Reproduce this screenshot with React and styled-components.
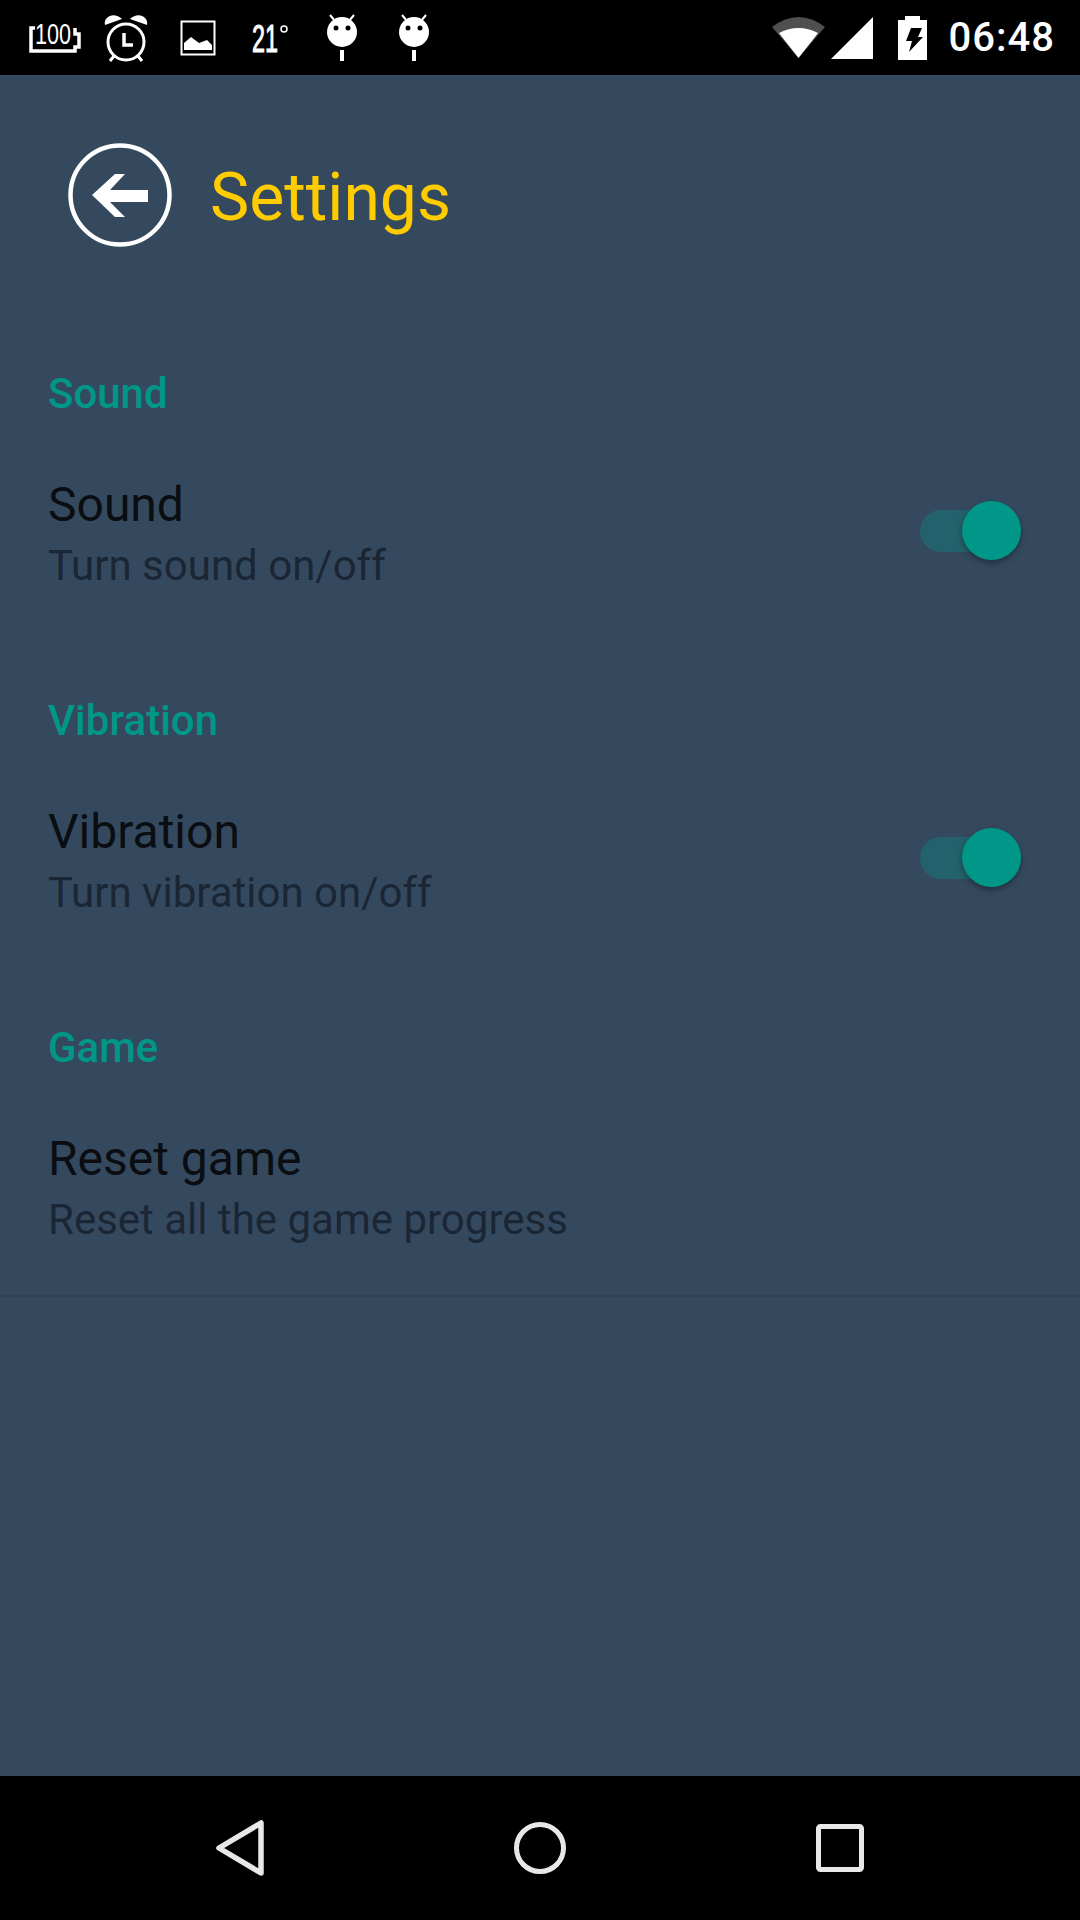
import React from "react";
import styled, { createGlobalStyle } from "styled-components";

const GlobalStyle = createGlobalStyle`
  html, body { margin: 0; padding: 0; background: #000; }
  body { font-family: Roboto, "Noto Sans", sans-serif; }
`;

/* ---------- styles ---------- */

const Screen = styled.div`
  width: 1080px;
  height: 1920px;
  display: flex;
  flex-direction: column;
  background: #35495e;
  overflow: hidden;
`;

const StatusBar = styled.div`
  height: 75px;
  flex: none;
  background: #000;
  display: flex;
  justify-content: space-between;
  align-items: center;
  color: #fff;
`;

const StatusGroup = styled.div`
  display: flex;
  align-items: center;
  padding: ${(p) => (p.$right ? "0 25px 0 0" : "0 0 0 29px")};
`;

const Icon = styled.svg`
  display: block;
  flex: none;
  overflow: visible;
  margin-left: ${(p) => p.$gap || 0}px;
`;

const Clock = styled.span`
  margin-left: 22px;
  font-size: 40px;
  line-height: 75px;
  font-weight: 500;
  letter-spacing: 1px;
`;

const Main = styled.main`
  flex: 1;
  display: flex;
  flex-direction: column;
`;

const Header = styled.header`
  height: 196px;
  flex: none;
  box-sizing: border-box;
  display: flex;
  align-items: center;
  padding: 44px 0 0 68px;
  gap: 38px;
`;

const Title = styled.h1`
  margin: 6px 0 0;
  font-size: 66px;
  line-height: 76px;
  font-weight: 400;
  color: #ffcc00;
`;

const Section = styled.section`
  height: 327px;
  flex: none;
  padding: 97px 48px 0 48px;
  box-sizing: border-box;
`;

const SectionLabel = styled.h2`
  margin: 0;
  font-size: 42px;
  line-height: 52px;
  font-weight: 500;
  color: #009688;
`;

const Row = styled.div`
  margin-top: 53px;
  display: flex;
  justify-content: space-between;
  align-items: center;
`;

const RowText = styled.div`
  display: flex;
  flex-direction: column;
`;

const RowTitle = styled.div`
  font-size: 48px;
  line-height: 64px;
  color: #0a0d11;
`;

const RowSub = styled.div`
  font-size: 42px;
  line-height: 56px;
  margin-top: 1px;
  color: #1b2635;
`;

const SwitchTrack = styled.div`
  position: relative;
  width: 96px;
  height: 42px;
  margin: 0 16px 5px 0;
  border-radius: 21px;
  background: #23626c;
`;

const SwitchKnob = styled.div`
  position: absolute;
  top: -9px;
  right: -5px;
  width: 59px;
  height: 59px;
  border-radius: 50%;
  background: #009688;
  box-shadow: 0 3px 6px rgba(0, 0, 0, 0.35);
`;

const Divider = styled.div`
  height: 2px;
  flex: none;
  margin-top: 43px;
  background: #2f4255;
`;

const NavBar = styled.nav`
  height: 144px;
  flex: none;
  background: #000;
  display: flex;
  justify-content: center;
  align-items: center;
`;

const NavButton = styled.div`
  width: 300px;
  display: flex;
  justify-content: center;
`;

/* ---------- icons ---------- */

const narrow = "Liberation Sans Narrow, Liberation Sans, sans-serif";

const Battery100 = () => (
  <Icon width="52" height="50" viewBox="0 0 52 50" fill="none">
    <path d="M6 15H2V38H46V34H50V21H46V15" stroke="#fff" strokeWidth="3.5" />
    <text x="6" y="31" fontFamily={narrow} fontSize="29" fill="#fff" textLength="36" lengthAdjust="spacingAndGlyphs">100</text>
  </Icon>
);

const Alarm = () => (
  <Icon $gap={23} width="44" height="48" viewBox="0 0 44 48" fill="none">
    <circle cx="22" cy="28" r="18" stroke="#fff" strokeWidth="3" />
    <path d="M20 19V31H29" stroke="#fff" strokeWidth="3.5" />
    <path d="M1 11C-1 3 10-3 18 5ZM43 11C45 3 34-3 26 5Z" fill="#fff" />
    <path d="M10 42L6 47M34 42L38 47" stroke="#fff" strokeWidth="3" />
  </Icon>
);

const ImageIcon = () => (
  <Icon $gap={32} width="36" height="36" viewBox="0 0 36 36" fill="none">
    <rect x="1.5" y="1.5" width="33" height="33" stroke="#fff" strokeWidth="2" />
    <path d="M4 30V23L11 17L19 23L27 20L32 25V30Z" fill="#fff" />
  </Icon>
);

const Weather = () => (
  <Icon $gap={36} width="37" height="50" viewBox="0 0 37 50">
    <text x="0" y="39" fontFamily={narrow} fontSize="38" fill="#fff" stroke="#fff" strokeWidth="1" textLength="26" lengthAdjust="spacingAndGlyphs">21</text>
    <circle cx="32" cy="16" r="3" fill="none" stroke="#fff" strokeWidth="1.5" />
  </Icon>
);

const Droid = ({ gap }) => (
  <Icon $gap={gap} width="30" height="46" viewBox="0 0 30 46">
    <path d="M3 0L8 6M27 0L22 6" stroke="#fff" strokeWidth="2" />
    <circle cx="15" cy="17" r="15" fill="#fff" />
    <circle cx="9" cy="13" r="2.5" fill="#000" />
    <circle cx="21" cy="13" r="2.5" fill="#000" />
    <rect x="13" y="35" width="4" height="11" fill="#fff" />
  </Icon>
);

const Wifi = () => (
  <Icon width="53" height="42" viewBox="0 0 53 42">
    <path d="M0 10Q26.5 -10 53 10L26.5 41Z" fill="#4f4f4f" />
    <path d="M7 16Q26.5 6 46 16L26.5 41Z" fill="#fff" />
  </Icon>
);

const Signal = () => (
  <Icon $gap={6} width="42" height="42" viewBox="0 0 42 42">
    <path d="M0 42L42 0V42Z" fill="#fff" />
  </Icon>
);

const BatteryCharging = () => (
  <Icon $gap={25} width="29" height="44" viewBox="0 0 29 44">
    <path d="M7 0H22V4H29V44H0V4H7Z" fill="#fff" />
    <path d="M13 12H24L20 21H25L11 36L14 25H8Z" fill="#000" />
  </Icon>
);

const BackCircle = () => (
  <Icon width="104" height="104" viewBox="0 0 104 104" fill="none">
    <circle cx="52" cy="52" r="49.5" stroke="#fff" strokeWidth="4.5" />
    <path d="M24 52L47 31H57L42 47H80V59H42L57 74H47Z" fill="#fff" />
  </Icon>
);

const NavBack = () => (
  <Icon width="50" height="58" viewBox="0 0 50 58" fill="none">
    <path d="M46 4V54L4 29Z" stroke="#e8e8e8" strokeWidth="5.5" strokeLinejoin="round" />
  </Icon>
);

const NavHome = () => (
  <Icon width="52" height="52" viewBox="0 0 52 52" fill="none">
    <circle cx="26" cy="26" r="23.5" stroke="#e8e8e8" strokeWidth="5" />
  </Icon>
);

const NavRecent = () => (
  <Icon width="48" height="48" viewBox="0 0 48 48" fill="none">
    <rect x="2.5" y="2.5" width="43" height="43" rx="2" stroke="#e8e8e8" strokeWidth="5" />
  </Icon>
);

/* ---------- component ---------- */

const sections = [
  { label: "Sound", title: "Sound", sub: "Turn sound on/off", toggle: true },
  { label: "Vibration", title: "Vibration", sub: "Turn vibration on/off", toggle: true },
  { label: "Game", title: "Reset game", sub: "Reset all the game progress" },
];

export default function App() {
  return (
    <Screen>
      <GlobalStyle />
      <StatusBar>
        <StatusGroup>
          <Battery100 />
          <Alarm />
          <ImageIcon />
          <Weather />
          <Droid gap={38} />
          <Droid gap={42} />
        </StatusGroup>
        <StatusGroup $right>
          <Wifi />
          <Signal />
          <BatteryCharging />
          <Clock>06:48</Clock>
        </StatusGroup>
      </StatusBar>

      <Main>
        <Header>
          <BackCircle />
          <Title>Settings</Title>
        </Header>

        {sections.map((s) => (
          <Section key={s.label}>
            <SectionLabel>{s.label}</SectionLabel>
            <Row>
              <RowText>
                <RowTitle>{s.title}</RowTitle>
                <RowSub>{s.sub}</RowSub>
              </RowText>
              {s.toggle && (
                <SwitchTrack>
                  <SwitchKnob />
                </SwitchTrack>
              )}
            </Row>
          </Section>
        ))}
        <Divider />
      </Main>

      <NavBar>
        <NavButton><NavBack /></NavButton>
        <NavButton><NavHome /></NavButton>
        <NavButton><NavRecent /></NavButton>
      </NavBar>
    </Screen>
  );
}
